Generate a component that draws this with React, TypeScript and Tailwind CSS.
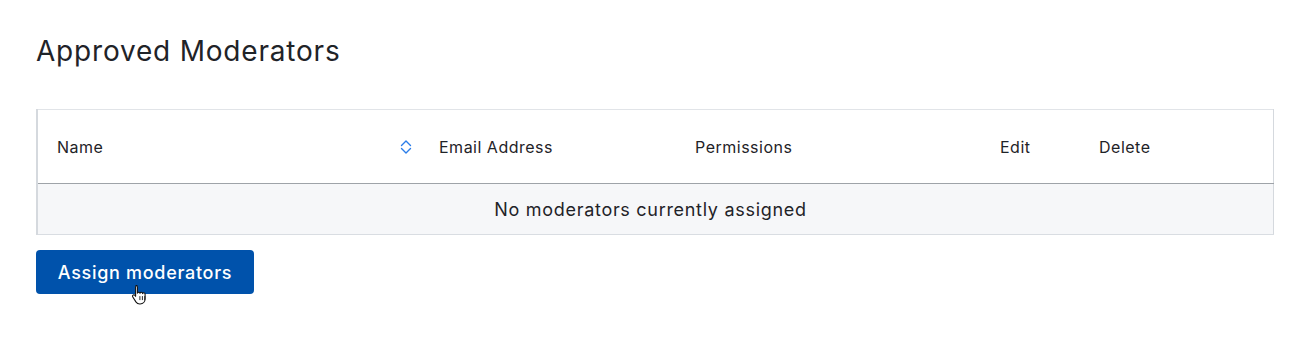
import React from 'react';

const columns = [
  { key: 'email', label: 'Email Address', width: 'w-[256px]' },
  { key: 'perm', label: 'Permissions', width: 'w-[305px]' },
  { key: 'edit', label: 'Edit', width: 'w-[99px]' },
  { key: 'delete', label: 'Delete', width: '' },
];

function SortIcon() {
  return (
    <svg width="12" height="16" viewBox="0 0 12 16" fill="none" className="shrink-0">
      <path d="M1.5 6.5 L6 2 L10.5 6.5" stroke="#2b7de9" strokeWidth="1.4" strokeLinecap="round" strokeLinejoin="round" />
      <path d="M1.5 9.5 L6 14 L10.5 9.5" stroke="#2b7de9" strokeWidth="1.4" strokeLinecap="round" strokeLinejoin="round" />
    </svg>
  );
}

function HandCursor() {
  return (
    <svg width="18" height="22" viewBox="0 0 18 22" className="absolute left-[95px] top-[34px] pointer-events-none">
      <path
        d="M5 1.5c.8 0 1.4.6 1.4 1.4v6.3c.2-.6.7-1 1.3-1 .7 0 1.2.5 1.3 1.1.2-.6.7-1 1.3-1 .7 0 1.3.6 1.3 1.3.2-.5.7-.8 1.2-.8.8 0 1.3.6 1.3 1.4v4.6c0 2.9-2 5.2-5 5.2H8.8c-1.7 0-3-.8-3.9-2.1L1.8 13c-.5-.7-.3-1.6.4-2 .6-.4 1.4-.2 1.8.4l.6.9V2.9c0-.8.6-1.4 1.4-1.4z"
        fill="#ffffff"
        stroke="#111111"
        strokeWidth="1.1"
        strokeLinejoin="round"
      />
      <path d="M8.9 12.5v3.2M11.4 12.5v3.2M13.8 12.5v3.2" stroke="#111111" strokeWidth="0.9" strokeLinecap="round" />
    </svg>
  );
}

export default function App() {
  return (
    <div className="bg-white w-[1307px] h-[338px] pl-[36px] pr-[33px] pt-[33px] text-[#1f2328] font-['Inter','Noto_Sans',sans-serif]">
      <h2 className="text-[28px] leading-[36px] font-normal tracking-[0.8px]">Approved Moderators</h2>

      <table className="mt-[40px] w-[1238px] table-fixed border-collapse border-l-2 border-r border-t border-b border-l-[#d5d9de] border-r-[#d5d9de] border-t-[#e1e4e8] border-b-[#d9dde2]">
        <thead>
          <tr className="h-[74px] border-b border-[#9ea3a8] bg-white">
            <th className="w-[389px] pl-[19px] pr-[14px] text-left font-normal text-[16px] tracking-[0.5px]">
              <div className="flex items-center justify-between">
                <span>Name</span>
                <SortIcon />
              </div>
            </th>
            {columns.map((c) => (
              <th key={c.key} className={`${c.width} px-[13px] text-left font-normal text-[16px] tracking-[0.5px]`}>
                {c.label}
              </th>
            ))}
          </tr>
        </thead>
        <tbody>
          <tr className="h-[51px] bg-[#f6f7f9]">
            <td colSpan={5} className="text-center text-[18px] tracking-[0.7px] pr-[10px]">
              No moderators currently assigned
            </td>
          </tr>
        </tbody>
      </table>

      <div className="relative mt-[15px] inline-block">
        <button className="h-[44px] w-[218px] rounded-[4px] bg-[#0052ab] text-white text-[18px] font-medium tracking-[0.7px]">
          Assign moderators
        </button>
        <HandCursor />
      </div>
    </div>
  );
}
